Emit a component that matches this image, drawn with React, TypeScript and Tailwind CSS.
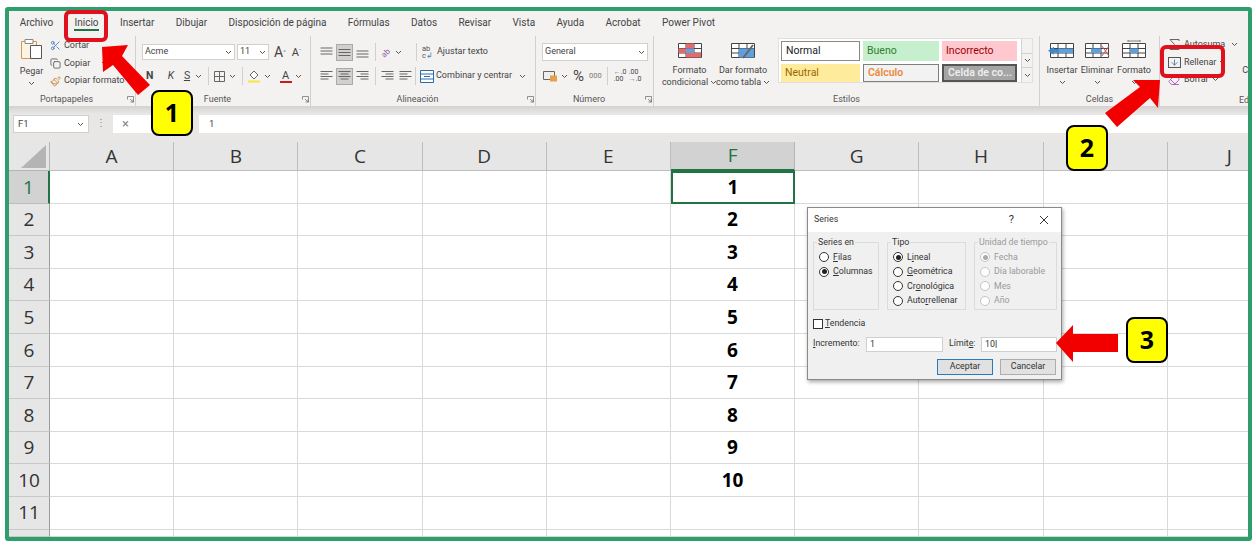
import { Scissors, Copy, Paintbrush, Eraser, ArrowDown } from "lucide-react";

const tabs = ["Archivo", "Inicio", "Insertar", "Dibujar", "Disposición de página", "Fórmulas", "Datos", "Revisar", "Vista", "Ayuda", "Acrobat", "Power Pivot"];
const cols = ["A", "B", "C", "D", "E", "F", "G", "H", "I", "J"];
const rows = [1, 2, 3, 4, 5, 6, 7, 8, 9, 10, 11, 12];

function Chev({ className = "" }: { className?: string }) {
  return (
    <svg width="7" height="5" viewBox="0 0 7 5" className={"shrink-0 " + className}>
      <path d="M1 1l2.5 2.5L6 1" fill="none" stroke="#555" strokeWidth="1" />
    </svg>
  );
}

function Launcher() {
  return (
    <svg width="7" height="7" viewBox="0 0 7 7" className="shrink-0">
      <path d="M.5.5h6v6M.5.5v3M3 3l3 3M6 3.5V6H3.5" fill="none" stroke="#777" strokeWidth="0.8" />
    </svg>
  );
}

function Lines({ pos, align }: { pos: "t" | "m" | "b" | "n"; align: "l" | "c" | "r" }) {
  const ys = pos === "t" ? [2, 5, 8] : pos === "m" ? [3.5, 6.5, 9.5] : pos === "b" ? [5, 8, 11] : [1.5, 4, 6.5, 9];
  return (
    <svg width="13" height="13" viewBox="0 0 13 13">
      {ys.map((y, i) => {
        const w = i % 2 === 1 && pos === "n" ? 8 : 12;
        const x = align === "l" ? 0.5 : align === "r" ? 12.5 - w : 6.5 - w / 2;
        return <path key={y} d={`M${x} ${y}h${w}`} stroke="#666" strokeWidth="1" />;
      })}
    </svg>
  );
}

function TableIcon({ children }: { children?: React.ReactNode }) {
  return (
    <svg width="30" height="20" viewBox="0 0 30 20">
      <path d="M3.5 3.5h23v14h-23zM3.5 8.5h23M3.5 13h23M11 3.5v14M19 3.5v14" fill="#fff" stroke="#444" strokeWidth="1" />
      {children}
    </svg>
  );
}

function Group({ width, label, launcher, children }: { width: string; label: string; launcher?: boolean; children: React.ReactNode }) {
  return (
    <div className={"flex flex-col shrink-0 h-[70px] border-r border-[#d2d0ce] " + width}>
      <div className="h-[54px] flex">{children}</div>
      <div className={"h-[14px] mt-[1px] pt-[3px] flex items-center justify-center relative text-[#555] " + (launcher ? "pr-[11px]" : "")}>
        <span>{label}</span>
        {launcher && (
          <span className="absolute right-[1px] top-[5px] flex">
            <Launcher />
          </span>
        )}
      </div>
    </div>
  );
}

function Sep({ className = "" }: { className?: string }) {
  return <span className={"w-px h-[18px] bg-[#d2d0ce] shrink-0 " + className} />;
}

function BigButton({ width, icon, line1, line2 }: { width: string; icon: React.ReactNode; line1: string; line2?: string }) {
  return (
    <div className={"flex flex-col items-center shrink-0 " + width}>
      <div className="h-[26px] flex items-center mt-[1px]">{icon}</div>
      <span className="h-[12px] leading-[12px] mt-[1px] whitespace-nowrap">{line1}</span>
      <span className="h-[12px] leading-[12px] whitespace-nowrap flex items-center gap-[2px]">
        {line2}
        <Chev />
      </span>
    </div>
  );
}

function Style({ label, className }: { label: string; className: string }) {
  return <div className={"h-[18px] flex items-center pl-[4px] text-[10.5px] " + className}>{label}</div>;
}

function Radio({ on, off, children }: { on?: boolean; off?: boolean; children: React.ReactNode }) {
  return (
    <div className="h-[14.4px] flex items-center gap-[4px]">
      <span className={"w-[10px] h-[10px] rounded-full border bg-white flex items-center justify-center " + (off ? "border-[#c4c4c4]" : "border-[#333]")}>
        {on && <span className={"w-[5px] h-[5px] rounded-full " + (off ? "bg-[#aaa]" : "bg-[#222]")} />}
      </span>
      <span className={off ? "text-[#9a9a9a]" : "text-[#333]"}>{children}</span>
    </div>
  );
}

function Box({ legend, width, off, children }: { legend: string; width: string; off?: boolean; children: React.ReactNode }) {
  return (
    <fieldset className={"h-[74px] shrink-0 border border-[#dcdcdc] pl-[5px] pt-[1px] " + width}>
      <legend className={"px-[1px] ml-[-2px] " + (off ? "text-[#9a9a9a]" : "text-[#333]")}>{legend}</legend>
      {children}
    </fieldset>
  );
}

function Badge({ n, className }: { n: number; className: string }) {
  return (
    <div className={"absolute w-[42px] h-[46px] rounded-[8px] border-2 border-black bg-[#ffff00] flex items-center justify-center text-[25px] font-bold text-black font-['Open_Sans',sans-serif] " + className}>
      {n}
    </div>
  );
}

export default function App() {
  return (
    <div className="relative w-[1256px] h-[548px] bg-white overflow-hidden font-['Roboto',sans-serif]">
      <div className="absolute left-[5px] top-[7px] w-[1247px] h-[534px] border-4 border-[#2f9e6c] rounded-[3px] overflow-hidden flex flex-col bg-[#f3f2f1]">
        {/* tabs */}
        <div className="h-[25px] flex items-center text-[10px] text-[#444] shrink-0">
          {tabs.map(t => (
            <div key={t} className="relative px-[10.7px] pb-[2px] h-full flex items-center whitespace-nowrap">
              {t}
              {t === "Inicio" && <span className="absolute left-[10px] right-[10px] bottom-[5px] h-[2px] bg-[#217346]" />}
            </div>
          ))}
        </div>

        {/* ribbon */}
        <div className="h-[70px] shrink-0 flex text-[9px] text-[#444] overflow-hidden">
          <Group width="w-[127px]" label="Portapapeles" launcher>
            <div className="w-[41px] flex flex-col items-center pl-[4px]">
              <svg width="24" height="25" viewBox="0 0 24 25">
                <path d="M1.5 5.5h15v17h-15z" fill="#fdf3e3" stroke="#d69a4c" />
                <path d="M5 3.5h8v4H5z" fill="#fff" stroke="#888" />
                <path d="M10.5 9.5h11v13h-11z" fill="#fff" stroke="#555" />
              </svg>
              <span className="mt-[4px] leading-[12px]">Pegar</span>
              <Chev className="mt-[4px]" />
            </div>
            <div className="flex flex-col pt-[1px]">
              <div className="h-[18px] flex items-center gap-[3px]"><Scissors size={11} color="#4a86c5" />Cortar</div>
              <div className="h-[18px] flex items-center gap-[3px]"><Copy size={11} color="#666" />Copiar<Chev className="ml-[8px]" /></div>
              <div className="h-[18px] flex items-center gap-[3px] whitespace-nowrap"><Paintbrush size={11} color="#c98a3a" />Copiar formato</div>
            </div>
          </Group>

          <Group width="w-[175px]" label="Fuente" launcher>
            <div className="flex flex-col pt-[4px] pl-[6px]">
              <div className="h-[24px] flex items-center">
                <div className="w-[93px] h-[16px] bg-white border border-[#d2d0ce] flex items-center justify-between px-[2px]">Acme<Chev /></div>
                <div className="w-[32px] h-[16px] ml-[2px] bg-white border border-[#d2d0ce] flex items-center justify-between px-[2px]">11<Chev /></div>
                <span className="ml-[5px] text-[14px] leading-none">A<sup className="text-[6px] text-[#3a7bbf]">^</sup></span>
                <span className="ml-[6px] text-[11px] leading-none">A<sup className="text-[6px] text-[#3a7bbf]">ˇ</sup></span>
              </div>
              <div className="h-[24px] flex items-center text-[10.5px]">
                <span className="w-[20px] pl-[4px] font-bold">N</span>
                <span className="w-[18px] text-center italic">K</span>
                <span className="w-[14px] text-center underline">S</span>
                <Chev className="ml-[1px]" />
                <Sep className="ml-[6px]" />
                <svg width="13" height="13" viewBox="0 0 13 13" className="ml-[4px]"><path d="M1.5 1.5h10v10h-10zM6.5 1.5v10M1.5 6.5h10" fill="none" stroke="#666" /></svg>
                <Chev className="ml-[3px]" />
                <Sep className="ml-[6px]" />
                <svg width="14" height="14" viewBox="0 0 14 14" className="ml-[4px]"><path d="M3 6l4-4 4 4-4 4z" fill="#fff" stroke="#666" /><path d="M1 11.5h12v2H1z" fill="#f5e642" /></svg>
                <Chev className="ml-[3px]" />
                <span className="ml-[8px] w-[13px] flex flex-col items-center leading-[11px] text-[11px]">A<span className="w-[12px] h-[2px] bg-[#d01818]" /></span>
                <Chev className="ml-[3px]" />
              </div>
            </div>
          </Group>

          <Group width="w-[225px]" label="Alineación" launcher>
            <div className="flex flex-col pt-[4px] pl-[9px]">
              <div className="h-[24px] flex items-center">
                <span className="w-[15px]"><Lines pos="t" align="c" /></span>
                <span className="w-[17px] h-[17px] bg-[#d2d0ce] border border-[#aaa] flex items-center justify-center ml-[1px]"><Lines pos="m" align="c" /></span>
                <span className="w-[15px] ml-[3px]"><Lines pos="b" align="c" /></span>
                <Sep className="ml-[4px]" />
                <span className="ml-[5px] w-[13px] text-[8px] leading-none -rotate-45 text-[#8a5fa8]">ab</span>
                <Chev className="ml-[1px]" />
                <Sep className="ml-[14px]" />
                <span className="ml-[5px] w-[15px] text-[7.5px] leading-[7.5px] text-[#555]">ab<br />c<span className="text-[#3a7bbf]">↲</span></span>
                <span className="whitespace-nowrap">Ajustar texto</span>
              </div>
              <div className="h-[24px] flex items-center">
                <span className="w-[15px]"><Lines pos="n" align="l" /></span>
                <span className="w-[17px] h-[17px] bg-[#d2d0ce] border border-[#aaa] flex items-center justify-center ml-[1px]"><Lines pos="n" align="c" /></span>
                <span className="w-[15px] ml-[3px]"><Lines pos="n" align="r" /></span>
                <Sep className="ml-[4px]" />
                <span className="w-[13px] ml-[5px]"><Lines pos="n" align="r" /></span>
                <span className="w-[13px] ml-[5px]"><Lines pos="n" align="l" /></span>
                <Sep className="ml-[3px]" />
                <svg width="14" height="13" viewBox="0 0 14 13" className="ml-[4px]"><path d="M.5.5h13v12H.5zM.5 4h13M.5 9h13" fill="#fff" stroke="#2a6aa8" /><path d="M4 6.5h6" stroke="#2a6aa8" /></svg>
                <span className="ml-[2px] whitespace-nowrap">Combinar y centrar</span>
                <Chev className="ml-[7px]" />
              </div>
            </div>
          </Group>

          <Group width="w-[118px]" label="Número" launcher>
            <div className="flex flex-col pt-[4px] pl-[6px]">
              <div className="h-[24px] flex items-center">
                <div className="w-[106px] h-[18px] bg-white border border-[#d2d0ce] flex items-center justify-between px-[2px]">General<Chev /></div>
              </div>
              <div className="h-[24px] flex items-center">
                <svg width="15" height="12" viewBox="0 0 15 12" className="ml-[1px]"><path d="M.5 1.5h11v8H.5z" fill="#eee" stroke="#666" /><path d="M7 5.5h7v6H7z" fill="#e8a048" /></svg>
                <Chev className="ml-[3px]" />
                <span className="ml-[5px] text-[15px] leading-none">%</span>
                <span className="ml-[5px] text-[7.5px] text-[#777]">000</span>
                <Sep className="ml-[5px]" />
                <span className="ml-[6px] w-[14px] text-[7px] leading-[7px]"><span className="text-[#3a7bbf]">←</span>.0<br />.00</span>
                <span className="ml-[1px] w-[14px] text-[7px] leading-[7px]">.00<br /><span className="text-[#3a7bbf]">→</span>.0</span>
              </div>
            </div>
          </Group>

          <Group width="w-[386px]" label="Estilos">
            <BigButton width="w-[57px] ml-[7px]" line1="Formato" line2="condicional"
              icon={<TableIcon><path d="M11 3.5h8v5h-8zM3.5 8.5H11V13H3.5zM11 13h15v4.5H11z" fill="#e26b6b" /><path d="M11 8.5h8V13h-8z" fill="#6a9fd8" /></TableIcon>} />
            <BigButton width="w-[58px] ml-[-4px]" line1="Dar formato" line2="como tabla"
              icon={<TableIcon><path d="M11 8.5h15v9H11z" fill="#5ea0de" /><path d="M15 18l10-13" stroke="#666" strokeWidth="2" /></TableIcon>} />
            <div className="ml-[6px] w-[255px] h-[45px] mt-[2px] flex bg-white border border-[#e1dfdd]">
              <div className="w-[243px] grid grid-cols-[79px_76px_75px] gap-x-[3px] gap-y-[3px] pt-[2px] pl-[2px] content-start">
                <Style label="Normal" className="!h-[20px] bg-white border border-[#8a8a8a] text-[#222]" />
                <Style label="Bueno" className="!h-[20px] bg-[#c6efce] text-[#2e7d32]" />
                <Style label="Incorrecto" className="!h-[20px] bg-[#ffc7ce] text-[#9c0006]" />
                <Style label="Neutral" className="bg-[#ffeb9c] text-[#9c6500]" />
                <Style label="Cálculo" className="bg-[#f2f2f2] border border-[#7f7f7f] text-[#ea8a3a] font-semibold" />
                <Style label="Celda de co..." className="bg-[#a5a5a5] border-2 border-[#555] text-[#eee] font-semibold" />
              </div>
              <div className="w-[11px] ml-auto flex flex-col text-[6px] items-center bg-[#f3f2f1] border-l border-[#d2d0ce]">
                <span className="flex-1 border-b border-[#d2d0ce] w-full" />
                <span className="flex-1 border-b border-[#d2d0ce] w-full flex items-center justify-center"><Chev /></span>
                <span className="flex-1 w-full flex items-center justify-center"><Chev /></span>
              </div>
            </div>
          </Group>

          <Group width="w-[120px]" label="Celdas">
            <BigButton width="w-[38px] ml-[3px]" line1="Insertar"
              icon={<TableIcon><path d="M11 8.5h15V13H11z" fill="#5ea0de" /><path d="M1 10.7l6-4v8zM6 9h6v3.5H6z" fill="#3a8ad0" /></TableIcon>} />
            <BigButton width="w-[32px]" line1="Eliminar"
              icon={<TableIcon><path d="M9 8.5h10V13H9z" fill="#5ea0de" /><path d="M20 6l7 10M27 6l-7 10" stroke="#d05050" /></TableIcon>} />
            <BigButton width="w-[42px]" line1="Formato"
              icon={<TableIcon><path d="M11 8.5h8V13h-8z" fill="#5ea0de" /><path d="M9 1h12M9 0v2M21 0v2" stroke="#666" strokeWidth="0.8" /></TableIcon>} />
          </Group>

          <div className="flex-1 overflow-hidden relative h-[70px]">
            <div className="flex flex-col pl-[8px]">
              <div className="h-[17.5px] flex items-center whitespace-nowrap">
                <svg width="13" height="13" viewBox="0 0 13 13" className="mr-[3px]"><path d="M11 3V1.5H2l4.5 5-4.5 5h9V10" fill="none" stroke="#666" /></svg>
                Autosuma<Chev className="ml-[6px]" />
              </div>
              <div className="h-[17.5px] flex items-center gap-[3px] whitespace-nowrap"><span className="w-[13px] h-[11px] border border-[#555] flex items-center justify-center"><ArrowDown size={9} color="#2a6aa8" /></span>Rellenar<Chev /></div>
              <div className="h-[17.5px] flex items-center gap-[3px] whitespace-nowrap"><span className="w-[13px] flex"><Eraser size={12} color="#b060c0" /></span>Borrar<Chev /></div>
            </div>
            <span className="absolute right-[0px] top-[28px]">C</span>
            <span className="absolute right-[-1px] top-[58px] text-[#555]">Ed</span>
          </div>
        </div>

        {/* ribbon shadow */}
        <div className="h-[7px] shrink-0 bg-gradient-to-b from-[#d3d2d1] to-[#e6e5e4]" />

        {/* formula bar */}
        <div className="h-[29px] shrink-0 bg-[#e8e7e6] flex items-start pt-[2px] text-[9.5px] text-[#444]">
          <div className="ml-[4px] w-[76px] h-[18px] bg-white border border-[#d2d0ce] flex items-center justify-between px-[4px]">F1<Chev /></div>
          <span className="w-[24px] text-center text-[#888] leading-[16px]">⋮</span>
          <div className="w-[70px] h-[18px] bg-white flex items-center pl-[9px] text-[#888] text-[13px]">×</div>
          <div className="ml-[16px] flex-1 h-[18px] bg-white flex items-center pl-[10px]">1</div>
        </div>

        {/* sheet */}
        <div className="flex-1 grid grid-cols-[41px_repeat(10,124.2px)] grid-rows-[29px_repeat(11,32.6px)_1fr] bg-white overflow-hidden font-['Open_Sans',sans-serif] text-[#333]">
          <div className="bg-[#e6e6e6] border-r border-b border-[#b5b5b5] flex items-end justify-end pr-[3px] pb-[2px]">
            <svg width="25" height="23" viewBox="0 0 25 23"><path d="M25 0v23H0z" fill="#b4b4b4" /></svg>
          </div>
          {cols.map(c => (
            <div key={c} className={"flex items-center justify-center text-[19px] border-b border-r " + (c === "F" ? "bg-[#d2d2d2] border-r-[#b5b5b5] border-b-2 border-b-[#217346] text-[#217346]" : "bg-[#e6e6e6] border-[#bdbdbd]")}>
              {c}
            </div>
          ))}
          {rows.map(r => (
            <div key={r} className="contents">
              <div className={"flex items-center justify-center text-[19px] border-r border-b overflow-hidden " + (r === 1 ? "bg-[#d2d2d2] border-r-2 border-r-[#217346] border-b-[#bdbdbd] text-[#217346]" : "bg-[#e6e6e6] border-r-[#9c9c9c] border-b-[#c8c8c8]")}>
                {r < 12 ? r : ""}
              </div>
              {cols.map(c => (
                <div key={c} className={"flex items-center justify-center text-[19px] font-bold text-black " + (c === "F" && r === 1 ? "border-2 border-[#217346]" : "border-r border-b border-[#d9d9d9]")}>
                  {c === "F" && r < 11 ? r : ""}
                </div>
              ))}
            </div>
          ))}
        </div>
      </div>

      {/* dialog */}
      <div className="absolute left-[807px] top-[207px] w-[255px] h-[173px] border border-[#8a8a8a] bg-[#f0f0f0] shadow-[1px_2px_4px_rgba(0,0,0,0.35)] flex flex-col text-[8.8px] text-[#333]">
        <div className="h-[24px] bg-white flex items-center pl-[6px] shrink-0">
          <span>Series</span>
          <span className="ml-auto mr-[25px] text-[11px]">?</span>
          <svg width="10" height="10" viewBox="0 0 10 10" className="mr-[12px]"><path d="M1 1l8 8M9 1l-8 8" stroke="#333" /></svg>
        </div>
        <div className="flex gap-[8px] pl-[5px] mt-[4px]">
          <Box legend="Series en" width="w-[66px]">
            <Radio><u>F</u>ilas</Radio>
            <Radio on><u>C</u>olumnas</Radio>
          </Box>
          <Box legend="Tipo" width="w-[79px]">
            <Radio on>L<u>i</u>neal</Radio>
            <Radio><u>G</u>eométrica</Radio>
            <Radio>Cr<u>o</u>nológica</Radio>
            <Radio>Auto<u>r</u>rellenar</Radio>
          </Box>
          <Box legend="Unidad de tiempo" width="w-[83px]" off>
            <Radio on off>Fecha</Radio>
            <Radio off>Día laborable</Radio>
            <Radio off>Mes</Radio>
            <Radio off>Año</Radio>
          </Box>
        </div>
        <div className="h-[14px] mt-[7px] ml-[5px] flex items-center gap-[2px]">
          <span className="w-[10px] h-[10px] border border-[#333] bg-white" />
          <span><u>T</u>endencia</span>
        </div>
        <div className="h-[16px] mt-[5px] ml-[5px] flex items-center">
          <span className="w-[53px]"><u>I</u>ncremento:</span>
          <div className="w-[77px] h-[15px] bg-white border border-[#cfcfcf] pl-[3px] leading-[13px]">1</div>
          <span className="w-[32px] ml-[6px]">Límit<u>e</u>:</span>
          <div className="w-[76px] h-[15px] bg-white border border-[#cfcfcf] pl-[3px] leading-[13px]">10<span className="text-black">|</span></div>
        </div>
        <div className="mt-[7px] flex justify-end gap-[7px] mr-[5px]">
          <div className="w-[56px] h-[16px] bg-[#e1e1e1] border border-[#2a78bd] flex items-center justify-center">Aceptar</div>
          <div className="w-[56px] h-[16px] bg-[#e1e1e1] border border-[#adadad] flex items-center justify-center">Cancelar</div>
        </div>
      </div>

      {/* annotations */}
      <div className="absolute left-[64px] top-[10px] w-[44px] h-[32px] border-4 border-[#e0101c] rounded-[6px]" />
      <div className="absolute left-[1160px] top-[45px] w-[65px] h-[33px] border-4 border-[#e0101c] rounded-[6px]" />
      <svg width="1256" height="548" viewBox="0 0 1256 548" className="absolute left-0 top-0 pointer-events-none">
        <polygon points="102,47 128,45 122,56 150,85 138,95 113,65 103,72" fill="#f20000" />
        <polygon points="1160,80 1158,108 1150,98 1117,127 1105,113 1140,87 1133,80" fill="#f20000" />
        <polygon points="1056,343 1073,325 1073,334 1118,334 1118,352 1073,352 1073,362" fill="#f20000" />
      </svg>
      <Badge n={1} className="left-[151px] top-[90px]" />
      <Badge n={2} className="left-[1066px] top-[125px]" />
      <Badge n={3} className="left-[1126px] top-[317px]" />
    </div>
  );
}
